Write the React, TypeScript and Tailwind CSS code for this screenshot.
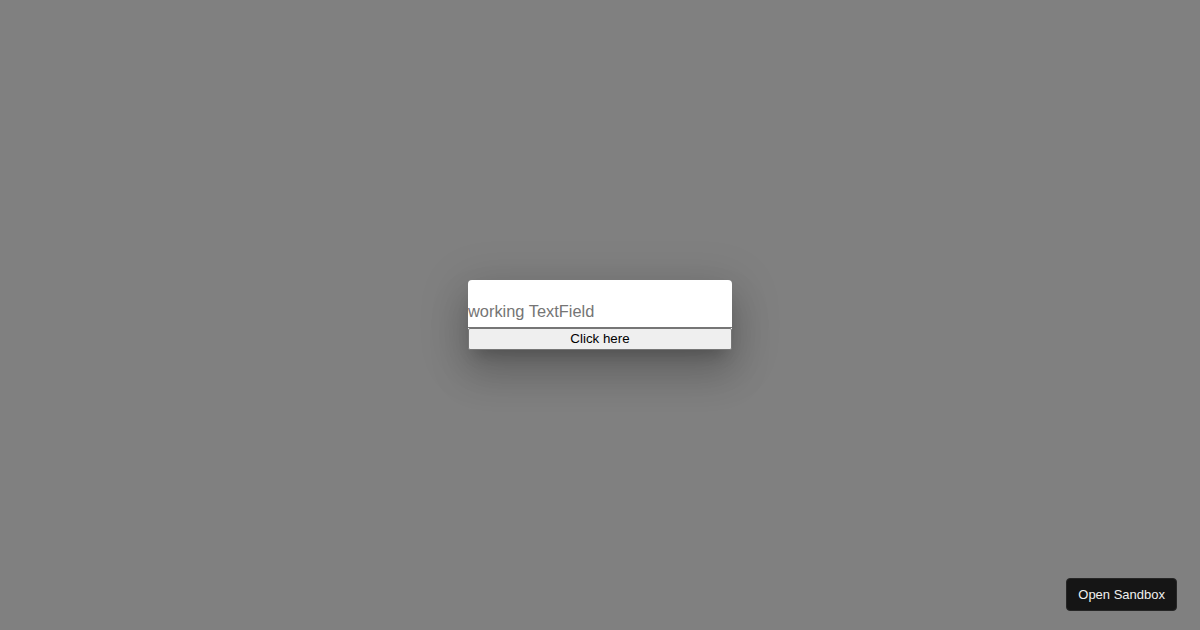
export default function App() {
  return (
    <div className="relative flex h-[630px] w-[1200px] items-center justify-center overflow-hidden bg-[#808080] font-['Liberation_Sans',Arial,sans-serif]">
      <div className="flex w-[264px] flex-col rounded-[4px] bg-white shadow-[0px_11px_15px_-7px_rgba(0,0,0,0.2),0px_24px_38px_3px_rgba(0,0,0,0.14),0px_9px_46px_8px_rgba(0,0,0,0.12)]">
        <input
          type="text"
          placeholder="working TextField"
          className="box-border w-full border-b border-[#767676] bg-transparent pt-[22px] pb-[7px] text-[16.4px] leading-[18px] text-black outline-none placeholder:text-[#757575]"
        />
        <button
          type="button"
          className="box-border h-[22px] w-full rounded-[2px] border border-[#767676] bg-[#efefef] text-[13.33px] leading-[18px] text-black"
        >
          Click here
        </button>
      </div>

      <button
        type="button"
        className="absolute right-[23px] bottom-[19px] h-[33px] rounded-[4px] border border-[#262626] bg-[#151515] px-[11px] text-[13px] text-[#f0f0f0]"
      >
        Open Sandbox
      </button>
    </div>
  );
}
